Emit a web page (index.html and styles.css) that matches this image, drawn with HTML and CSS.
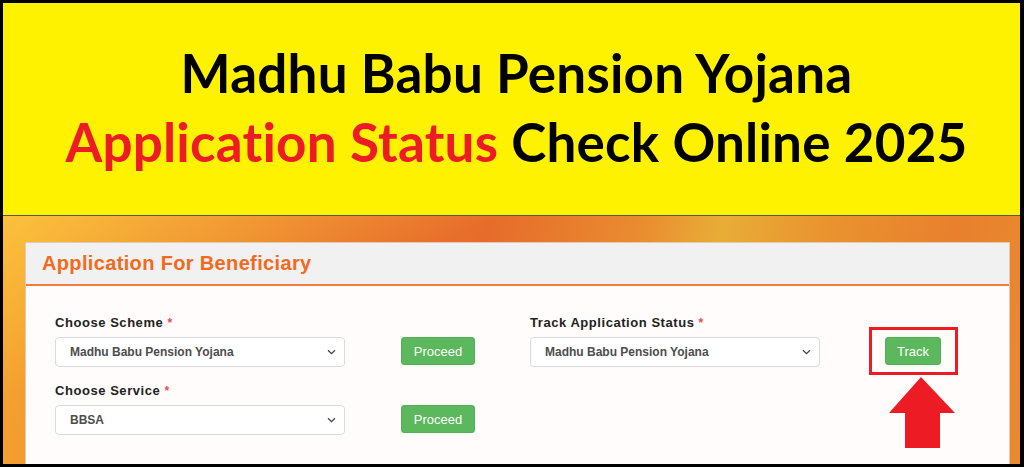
FILE: index.html
```html
<!DOCTYPE html>
<html lang="en">
<head>
<meta charset="utf-8">
<title>Madhu Babu Pension Yojana Application Status</title>
<link rel="stylesheet" href="styles.css">
</head>
<body>
<div class="frame">
  <header class="banner">
    <h1 class="title">
      <span class="line">Madhu Babu Pension Yojana</span>
      <span class="line"><span class="red">Application Status</span> Check Online 2025</span>
    </h1>
  </header>
  <section class="stage">
    <div class="card">
      <div class="card-head">Application For Beneficiary</div>
      <div class="card-body">
        <div class="form">
          <div class="group">
            <div class="field">
              <label class="label">Choose Scheme <span class="req">*</span></label>
              <div class="select"><span>Madhu Babu Pension Yojana</span><svg class="chev" width="9" height="6" viewBox="0 0 9 6"><path d="M1 1.2l3.5 3.5 3.5-3.5" fill="none" stroke="#444" stroke-width="1.3"/></svg></div>
            </div>
            <button class="btn">Proceed</button>
          </div>
          <div class="group">
            <div class="field">
              <label class="label">Track Application Status <span class="req">*</span></label>
              <div class="select"><span>Madhu Babu Pension Yojana</span><svg class="chev" width="9" height="6" viewBox="0 0 9 6"><path d="M1 1.2l3.5 3.5 3.5-3.5" fill="none" stroke="#444" stroke-width="1.3"/></svg></div>
            </div>
            <div class="highlight">
              <button class="btn btn-track">Track</button>
              <svg class="arrow" width="90" height="75" viewBox="0 0 90 75"><path d="M52 2 L86 38 L71 38 L71 73 L36 73 L36 38 L20 38 Z" fill="#ed1c24"/></svg>
            </div>
          </div>
          <div class="group">
            <div class="field">
              <label class="label">Choose Service <span class="req">*</span></label>
              <div class="select"><span>BBSA</span><svg class="chev" width="9" height="6" viewBox="0 0 9 6"><path d="M1 1.2l3.5 3.5 3.5-3.5" fill="none" stroke="#444" stroke-width="1.3"/></svg></div>
            </div>
            <button class="btn">Proceed</button>
          </div>
        </div>
      </div>
    </div>
  </section>
</div>
</body>
</html>
```
FILE: styles.css
```css
* { box-sizing: border-box; }
html, body { margin: 0; padding: 0; }
body { width: 1024px; height: 467px; overflow: hidden; background: #000; }

.frame {
  width: 1024px;
  height: 467px;
  border: 3px solid #000;
  border-right-width: 4px;
  display: flex;
  flex-direction: column;
  overflow: hidden;
}

.banner {
  height: 213px;
  flex: none;
  background: #fff200;
  border-bottom: 1px solid #5a5a3a;
  display: flex;
  align-items: flex-start;
  justify-content: center;
  padding-left: 10px;
}

.title {
  margin: 0;
  padding-top: 35px;
  font-family: Lato, "Open Sans", sans-serif;
  font-weight: 700;
  font-size: 53px;
  line-height: 69px;
  letter-spacing: 0.2px;
  font-variant-ligatures: none;
  color: #000;
  text-align: center;
}
.title .line { display: block; }
.title .red { color: #ed1c24; }

.stage {
  flex: 1;
  padding: 26px 10px 0 22px;
  background:
    linear-gradient(160deg, rgba(255,214,70,0.55) 0%, rgba(255,214,70,0) 30%),
    linear-gradient(100deg, #f6a631 0%, #ee8d2e 14%, #e9772d 32%, #e66c2b 46%, #e98b30 60%, #e8ad37 68%, #e9932f 78%, #e8802e 90%, #e98a2f 100%);
}

.card {
  width: 985px;
  height: 100%;
  background: #fffcfb;
  border: 1px solid #e3c9b8;
  border-bottom: 0;
  display: flex;
  flex-direction: column;
}

.card-head {
  height: 43px;
  flex: none;
  background: #f1f1f1;
  border-bottom: 2px solid #f47c3c;
  padding-left: 16px;
  display: flex;
  align-items: center;
  font-family: "Liberation Sans", Arial, sans-serif;
  font-weight: 700;
  font-size: 20px;
  letter-spacing: 0.35px;
  color: #f36a1e;
}

.card-body {
  padding: 29px 29px 0;
}

.form {
  display: grid;
  grid-template-columns: 420px 428px;
  column-gap: 55px;
  row-gap: 16px;
}

.group {
  display: flex;
  align-items: flex-end;
}

.field { width: 290px; flex: none; }

.label {
  display: block;
  font-family: "Liberation Sans", Arial, sans-serif;
  font-weight: 700;
  font-size: 13px;
  line-height: 16px;
  letter-spacing: 0.55px;
  color: #222;
  margin-bottom: 6px;
}
.req { color: #ef4a4a; font-size: 12px; letter-spacing: 0; }

.select {
  height: 30px;
  border: 1px solid #d9d9d9;
  border-radius: 4px;
  background: #fff;
  display: flex;
  align-items: center;
  justify-content: space-between;
  padding: 0 8px 0 14px;
  font-family: "Liberation Sans", Arial, sans-serif;
  font-weight: 700;
  font-size: 12px;
  color: #4d4d4d;
}

.chev { flex: none; }

.btn {
  height: 28px;
  margin-left: 56px;
  margin-bottom: 2px;
  padding: 0 10px;
  border: 1px solid #55b055;
  border-radius: 3px;
  background: #5cb85c;
  color: #fff;
  font-family: "Liberation Sans", Arial, sans-serif;
  font-size: 13px;
  font-weight: 400;
  width: 74px;
}

.highlight {
  position: relative;
  margin-left: 49px;
  margin-bottom: -8px;
  border: 3px solid #ed1c24;
  padding: 7px 14px 7px 13px;
  width: 89px;
  height: 48px;
}
.btn-track {
  margin: 0;
  width: 56px;
  padding: 0;
}
.arrow {
  position: absolute;
  left: -3px;
  top: 45px;
}
```
